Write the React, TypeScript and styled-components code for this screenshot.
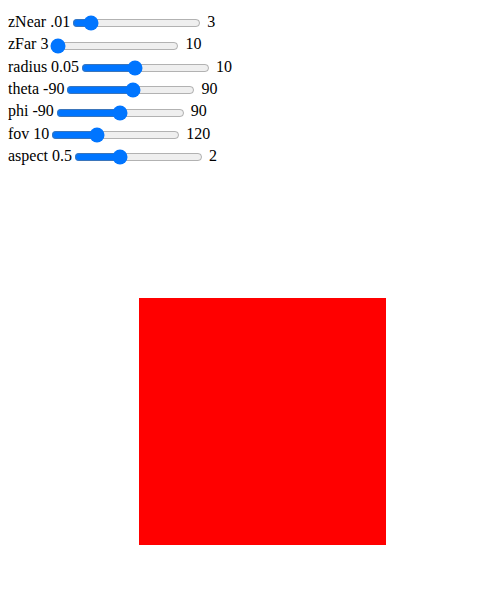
import React from 'react';
import styled, { createGlobalStyle } from 'styled-components';

const GlobalStyle = createGlobalStyle`
  body {
    margin: 8px;
    background: #fff;
    color: #000;
    font-family: "Liberation Serif", "Times New Roman", serif;
    font-size: 16px;
  }
`;

type Param = { name: string; min: number; max: number; step: number; value: number; minLabel: string; maxLabel: string };

const params: Param[] = [
  { name: 'zNear', min: 0.01, max: 3, step: 0.01, value: 0.3, minLabel: '.01', maxLabel: '3' },
  { name: 'zFar', min: 3, max: 10, step: 0.01, value: 3, minLabel: '3', maxLabel: '10' },
  { name: 'radius', min: 0.05, max: 10, step: 0.01, value: 4.1, minLabel: '0.05', maxLabel: '10' },
  { name: 'theta', min: -90, max: 90, step: 1, value: 3, minLabel: '-90', maxLabel: '90' },
  { name: 'phi', min: -90, max: 90, step: 1, value: 0, minLabel: '-90', maxLabel: '90' },
  { name: 'fov', min: 10, max: 120, step: 1, value: 47, minLabel: '10', maxLabel: '120' },
  { name: 'aspect', min: 0.5, max: 2, step: 0.01, value: 1, minLabel: '0.5', maxLabel: '2' },
];

const App: React.FC = () => {
  return (
    <>
      <GlobalStyle />
      <Controls>
        {params.map((p) => (
          <Row key={p.name}>
            {p.name} {p.minLabel}
            <Slider type="range" min={p.min} max={p.max} step={p.step} defaultValue={p.value} />
            {' '}{p.maxLabel}
          </Row>
        ))}
      </Controls>
      <Stage>
        <Square />
      </Stage>
    </>
  );
};

export default App;

const Controls = styled.div`
  display: flex;
  flex-direction: column;
  padding-top: 3px;
`;

const Row = styled.div`
  height: 22.33px;
  line-height: 22px;
  white-space: nowrap;
`;

const Slider = styled.input`
  margin: 2px;
  vertical-align: middle;
`;

const Stage = styled.div`
  padding-top: 131px;
  padding-left: 131px;
`;

const Square = styled.div`
  width: 247px;
  height: 247px;
  background: #ff0000;
`;
